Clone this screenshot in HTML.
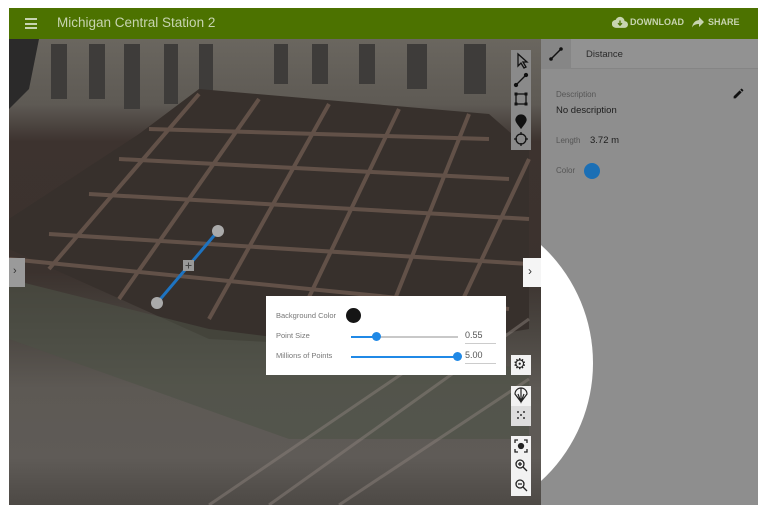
<!DOCTYPE html>
<html><head><style>
*{margin:0;padding:0;box-sizing:border-box}
body{width:768px;height:513px;background:#fff;position:relative;overflow:hidden;font-family:"Liberation Sans",sans-serif}
.hdr{position:absolute;left:9px;top:8px;width:749px;height:31px;background:#4c7200;color:#c9d6b5}
.hdr .t{position:absolute;left:48px;top:7px;font-size:13.5px;color:#c7d4b0}
.hdr .m{position:absolute;left:16px;top:10px;width:12px}
.hdr .m i{display:block;height:2px;background:#c7d4b0;margin-bottom:2.5px}
.hdr .b{position:absolute;top:9px;font-size:9px;font-weight:bold;color:#c7d4b0}
.scene{position:absolute;left:9px;top:39px;width:532px;height:466px;overflow:hidden;
background:linear-gradient(180deg,#6a665f 0%,#5e5a54 14%,#3d332f 22%,#3b322e 50%,#4a4540 62%,#5d5954 75%,#5f5b57 90%,#4d4945 100%)}
.panel{position:absolute;left:541px;top:39px;width:217px;height:466px;background:#8e8e8e}
.tab{position:absolute;left:541px;top:39px;width:217px;height:30px;background:#929292;border-bottom:1px solid #858585}
.tabic{position:absolute;left:541px;top:39px;width:30px;height:30px;background:#868686}
.lbl{position:absolute;font-size:8px;color:#555}
.val{position:absolute;font-size:9.5px;color:#1e1e1e}
.circle{position:absolute;left:273px;top:203px;width:320px;height:320px;border-radius:50%;background:#fff}
.tb{position:absolute;background:#969696;}
.btn{position:absolute;background:#f2f2f2;}
.pop{position:absolute;left:266px;top:296px;width:240px;height:79px;background:#fff}
.pop .l{position:absolute;left:10px;font-size:7.5px;color:#777}
</style></head><body>
<div class="hdr"><div class="m"><i></i><i></i><i></i></div><div class="t">Michigan Central Station 2</div>
<svg style="position:absolute;left:603px;top:8px" width="16" height="13" viewBox="0 0 24 18"><path d="M19 7A7 7 0 0 0 5.5 5 6 6 0 0 0 6 17h13a5 5 0 0 0 0-10z" fill="#c7d4b0"/><path d="M12 6v6M9 10l3 3 3-3" stroke="#4c7200" stroke-width="2" fill="none"/></svg>
<div class="b" style="left:621px">DOWNLOAD</div>
<svg style="position:absolute;left:683px;top:9px" width="12" height="11" viewBox="0 0 24 22"><path d="M14 0l10 10-10 10v-6C7 14 3 16 0 21 1 14 5 7 14 6z" fill="#c7d4b0"/></svg>
<div class="b" style="left:699px">SHARE</div></div>
<div class="panel"></div>
<div class="circle"></div>
<div class="tab"></div><div class="tabic"></div>
<svg style="position:absolute;left:548px;top:46px" width="16" height="16" viewBox="0 0 16 16"><line x1="3" y1="13" x2="13" y2="3" stroke="#111" stroke-width="1.5"/><circle cx="3" cy="13" r="1.8" fill="#111"/><circle cx="13" cy="3" r="1.8" fill="#111"/></svg>
<div class="val" style="left:586px;top:49px;color:#2a2a2a">Distance</div>
<div class="lbl" style="left:556px;top:90px">Description</div>
<div class="val" style="left:556px;top:105px">No description</div>
<svg style="position:absolute;left:732px;top:87px" width="13" height="13" viewBox="0 0 24 24"><path d="M3 17.3V21h3.7L17.8 9.9l-3.7-3.7zM20.7 7a1 1 0 0 0 0-1.4l-2.3-2.3a1 1 0 0 0-1.4 0l-1.8 1.8 3.7 3.7z" fill="#111"/></svg>
<div class="lbl" style="left:556px;top:136px">Length</div>
<div class="val" style="left:590px;top:135px">3.72 m</div>
<div class="lbl" style="left:556px;top:166px">Color</div>
<div style="position:absolute;left:584px;top:163px;width:16px;height:16px;border-radius:50%;background:#1b6fb5"></div>
<div class="scene">
<svg width="532" height="466" style="position:absolute;left:0;top:0">
<g fill="#3e3c3a">
<rect x="42" y="5" width="16" height="55"/><rect x="80" y="5" width="16" height="55"/><rect x="115" y="5" width="16" height="65"/><rect x="155" y="5" width="14" height="60"/><rect x="190" y="5" width="14" height="65"/><rect x="265" y="5" width="14" height="40"/><rect x="303" y="5" width="16" height="40"/><rect x="350" y="5" width="16" height="40"/><rect x="398" y="5" width="20" height="45"/><rect x="455" y="5" width="22" height="50"/>
</g>
<polygon points="0,0 30,0 20,50 0,70" fill="#2b2a2a"/>
<polygon points="130,95 190,50 480,75 520,110 520,290 400,310 200,300 0,210 0,180" fill="#37302c"/>
<g stroke="#6d5a50" stroke-width="4" opacity=".8">
<line x1="190" y1="55" x2="40" y2="230"/><line x1="250" y1="60" x2="110" y2="260"/><line x1="320" y1="65" x2="200" y2="280"/><line x1="390" y1="70" x2="280" y2="300"/><line x1="460" y1="75" x2="370" y2="300"/><line x1="520" y1="120" x2="440" y2="290"/>
<line x1="140" y1="90" x2="480" y2="100"/><line x1="110" y1="120" x2="500" y2="140"/><line x1="80" y1="155" x2="520" y2="180"/><line x1="40" y1="195" x2="520" y2="225"/><line x1="0" y1="220" x2="500" y2="270"/>
</g>
<polygon points="0,240 200,290 520,330 520,400 280,400 0,300" fill="#4c5146" opacity=".6"/>
<g stroke="#8a807a" stroke-width="3" opacity=".5"><line x1="260" y1="466" x2="520" y2="280"/><line x1="330" y1="466" x2="520" y2="340"/><line x1="200" y1="466" x2="400" y2="330"/></g>
<line x1="148" y1="264" x2="209" y2="192" stroke="#1e73c0" stroke-width="3"/>
<circle cx="148" cy="264" r="6" fill="#aaa"/><circle cx="209" cy="192" r="6" fill="#aaa"/>
<rect x="174" y="221" width="11" height="11" fill="#999"/><path d="M179.5 223.5v6M176.5 226.5h6" stroke="#444"/>
</svg>
</div>
<div class="tb" style="left:9px;top:258px;width:16px;height:29px;background:#9a9a9a"></div>
<div style="position:absolute;left:13px;top:265px;font-size:11px;color:#333">›</div>
<div class="btn" style="left:523px;top:258px;width:18px;height:29px;background:#f5f5f5"></div>
<div style="position:absolute;left:528px;top:264px;font-size:12px;color:#333">›</div>
<div class="tb" style="left:511px;top:50px;width:20px;height:100px;background:#8a8a8a"></div>
<svg style="position:absolute;left:511px;top:50px" width="20" height="100" viewBox="0 0 20 100" fill="none" stroke="#111" stroke-width="1.3">
<path d="M7 4l0 12 3-3 3 5 2-1-3-5h4z"/>
<line x1="5" y1="35" x2="15" y2="25"/><circle cx="5" cy="35" r="1.5" fill="#111"/><circle cx="15" cy="25" r="1.5" fill="#111"/>
<rect x="5" y="44" width="10" height="10"/><g fill="#111" stroke="none"><rect x="3.5" y="42.5" width="3" height="3"/><rect x="13.5" y="42.5" width="3" height="3"/><rect x="3.5" y="52.5" width="3" height="3"/><rect x="13.5" y="52.5" width="3" height="3"/></g>
<path d="M10 78c-3-4-5-6-5-8a5 5 0 0 1 10 0c0 2-2 4-5 8z" fill="#111"/>
<circle cx="10" cy="89" r="5"/><path d="M10 82v3M10 93v3M3 89h3M14 89h3"/>
</svg>
<div class="pop">
<div class="l" style="top:15px">Background Color</div>
<div style="position:absolute;left:80px;top:12px;width:15px;height:15px;border-radius:50%;background:#151515"></div>
<div class="l" style="top:35px">Point Size</div>
<div style="position:absolute;left:85px;top:40px;width:107px;height:1.5px;background:#c8c8c8"></div>
<div style="position:absolute;left:85px;top:40px;width:26px;height:1.5px;background:#2089e6"></div>
<div style="position:absolute;left:106px;top:36px;width:9px;height:9px;border-radius:50%;background:#2089e6"></div>
<div style="position:absolute;left:199px;top:34px;font-size:9px;color:#555">0.55</div>
<div style="position:absolute;left:199px;top:47px;width:31px;height:1px;background:#ccc"></div>
<div class="l" style="top:55px">Millions of Points</div>
<div style="position:absolute;left:85px;top:60px;width:107px;height:1.5px;background:#2089e6"></div>
<div style="position:absolute;left:187px;top:56px;width:9px;height:9px;border-radius:50%;background:#2089e6"></div>
<div style="position:absolute;left:199px;top:54px;font-size:9px;color:#555">5.00</div>
<div style="position:absolute;left:199px;top:67px;width:31px;height:1px;background:#ccc"></div>
</div>
<div class="btn" style="left:511px;top:355px;width:20px;height:20px"></div>
<div style="position:absolute;left:513px;top:355px;font-size:15px;color:#222">⚙</div>
<div class="btn" style="left:511px;top:386px;width:20px;height:40px"></div>
<div style="position:absolute;left:511px;top:406px;width:20px;height:20px;background:#ddd"></div>
<svg style="position:absolute;left:511px;top:386px" width="20" height="40" fill="none" stroke="#222" stroke-width="1.2"><path d="M4 8a6 6 0 0 1 12 0l-6 8zM10 2v14M7 8l3 8 3-8"/><g fill="#333" stroke="none"><circle cx="7" cy="26" r="1"/><circle cx="13" cy="26" r="1"/><circle cx="10" cy="29" r="1"/><circle cx="7" cy="32" r="1"/><circle cx="13" cy="32" r="1"/></g></svg>
<div class="btn" style="left:511px;top:436px;width:20px;height:60px"></div>
<svg style="position:absolute;left:511px;top:436px" width="20" height="60" fill="none" stroke="#222" stroke-width="1.3"><path d="M4 7V4h3M13 4h3v3M16 13v3h-3M7 16H4v-3"/><circle cx="10" cy="10" r="2.5" fill="#222"/><circle cx="9" cy="28" r="4"/><path d="M12 31l4 4M7 28h4M9 26v4"/><circle cx="9" cy="48" r="4"/><path d="M12 51l4 4M7 48h4"/></svg>
</body></html>
